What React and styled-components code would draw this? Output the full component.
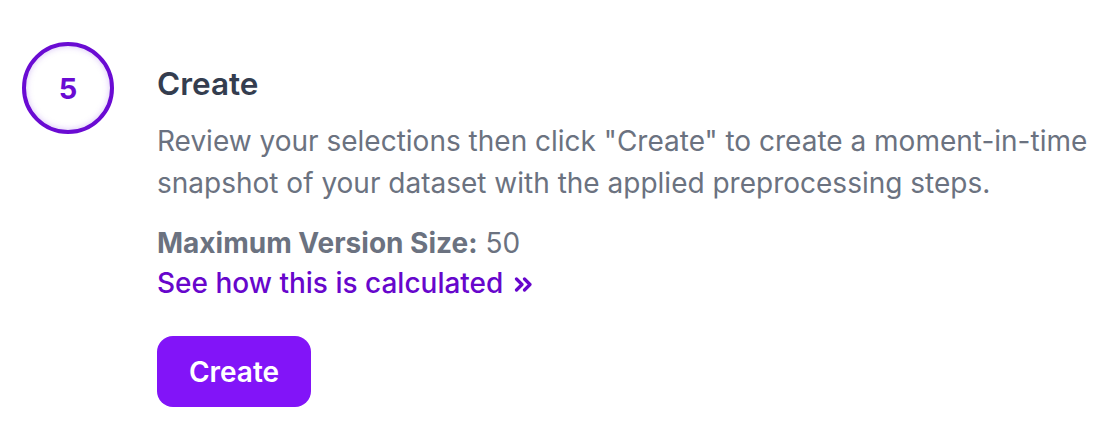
import React from "react";
import styled, { createGlobalStyle } from "styled-components";

const Global = createGlobalStyle`
  html, body { margin: 0; padding: 0; background: #ffffff; }
  body { font-family: Inter, "Noto Sans", sans-serif; -webkit-font-smoothing: antialiased; }
`;

const Step = styled.div`
  display: flex;
  align-items: flex-start;
  gap: 43px;
  padding: 42px 0 0 22px;
`;

const Circle = styled.div`
  flex: none;
  width: 92px;
  height: 92px;
  box-sizing: border-box;
  border-radius: 50%;
  border: 4px solid #6a0bd3;
  box-shadow: inset 0 0 6px rgba(140, 80, 230, 0.35);
  display: flex;
  align-items: center;
  justify-content: center;
  color: #6a0bd3;
  font-size: 29px;
  font-weight: 700;
`;

const Content = styled.div`
  display: flex;
  flex-direction: column;
  padding-top: 20px;
`;

const Title = styled.h2`
  margin: 0;
  font-size: 31.5px;
  line-height: 44px;
  font-weight: 600;
  color: #343d4f;
`;

const Description = styled.p`
  margin: 14px 0 0;
  font-size: 28px;
  line-height: 42px;
  color: #6b7280;
  max-width: 950px;
`;

const Meta = styled.div`
  margin-top: 19px;
  font-size: 28px;
  line-height: 40px;
  color: #6b7280;
`;

const Strong = styled.span`
  font-weight: 700;
`;

const Link = styled.a`
  display: inline-flex;
  align-items: center;
  gap: 11px;
  align-self: flex-start;
  font-size: 28px;
  line-height: 40px;
  color: #6706cc;
  text-decoration: none;
  font-weight: 500;
`;

const Chevrons = styled.svg`
  width: 18px;
  height: 15px;
  margin-top: 2px;
`;

const Button = styled.button`
  align-self: flex-start;
  margin-top: 33px;
  width: 154px;
  height: 71px;
  border: none;
  border-radius: 16px;
  background: #8214f8;
  color: #ffffff;
  font-family: Inter, "Noto Sans", sans-serif;
  font-size: 28px;
  font-weight: 600;
  cursor: pointer;
`;

export default function App() {
  return (
    <>
      <Global />
      <Step>
        <Circle>5</Circle>
        <Content>
          <Title>Create</Title>
          <Description>
            Review your selections then click "Create" to create a moment-in-time snapshot of your
            dataset with the applied preprocessing steps.
          </Description>
          <Meta>
            <Strong>Maximum Version Size:</Strong> 50
          </Meta>
          <Link href="#">
            See how this is calculated
            <Chevrons viewBox="0 0 18 15" fill="none" stroke="currentColor" strokeWidth="3.2" strokeLinecap="round" strokeLinejoin="round">
              <path d="M2.5 2 L8 7.5 L2.5 13" />
              <path d="M10.5 2 L16 7.5 L10.5 13" />
            </Chevrons>
          </Link>
          <Button>Create</Button>
        </Content>
      </Step>
    </>
  );
}
